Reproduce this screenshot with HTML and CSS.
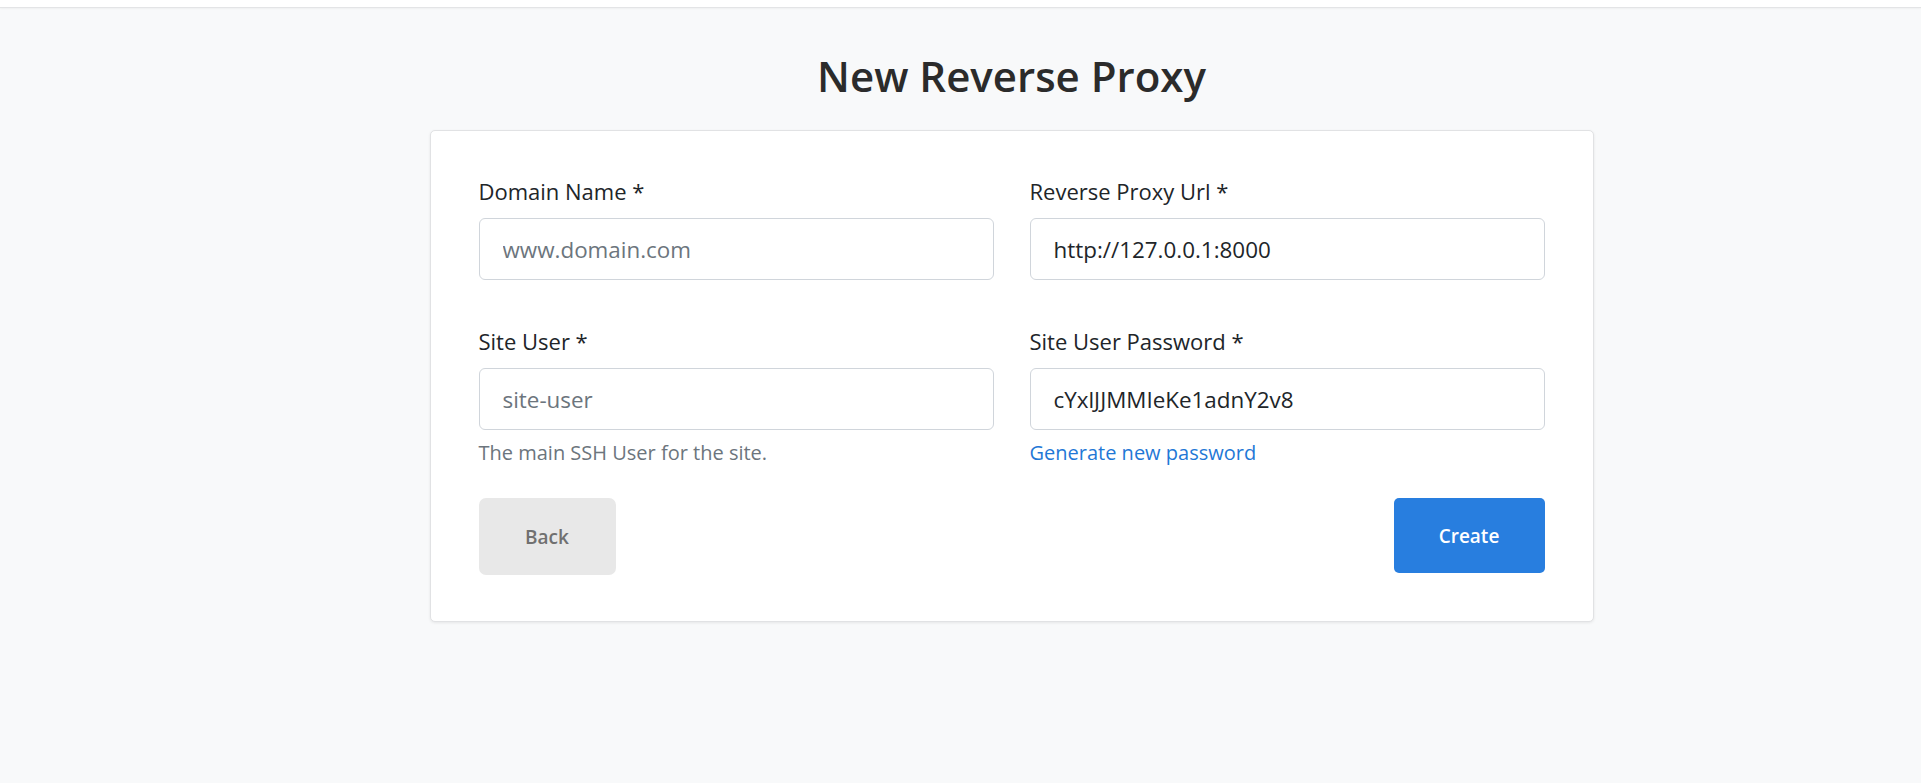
FILE: index.html
```html
<!DOCTYPE html>
<html lang="en">
<head>
<meta charset="utf-8">
<title>New Reverse Proxy</title>
<link rel="stylesheet" href="styles.css">
</head>
<body>
<div class="topbar"></div>
<main class="main">
  <h1 class="title">New Reverse Proxy</h1>
  <form class="card">
    <div class="grid">
      <div class="field">
        <label class="label">Domain Name *</label>
        <input class="input" type="text" placeholder="www.domain.com">
      </div>
      <div class="field">
        <label class="label">Reverse Proxy Url *</label>
        <input class="input" type="text" value="http://127.0.0.1:8000">
      </div>
      <div class="field">
        <label class="label">Site User *</label>
        <input class="input" type="text" placeholder="site-user">
        <div class="help">The main SSH User for the site.</div>
      </div>
      <div class="field">
        <label class="label">Site User Password *</label>
        <input class="input" type="text" value="cYxlJJMMIeKe1adnY2v8">
        <a class="help link" href="#">Generate new password</a>
      </div>
    </div>
    <div class="actions">
      <button type="button" class="btn btn-back">Back</button>
      <button type="button" class="btn btn-create">Create</button>
    </div>
  </form>
</main>
</body>
</html>
```
FILE: styles.css
```css
* { box-sizing: border-box; }
html, body { margin: 0; padding: 0; }
body {
  background: #f8f9fa;
  font-family: "Open Sans", "Noto Sans", sans-serif;
  color: #212529;
  min-height: 783px;
}
.topbar {
  height: 8px;
  background: #ffffff;
  border-bottom: 1px solid #e3e4e6;
  box-shadow: 0 1px 2px rgba(0,0,0,0.04);
}
.main {
  padding-left: 102px;
  display: flex;
  flex-direction: column;
  align-items: center;
}
.title {
  margin: 44px 0 0;
  font-size: 42px;
  line-height: 48px;
  font-weight: 600;
  color: #2b2b2b;
  letter-spacing: 0;
}
.card {
  width: 1164px;
  margin-top: 30px;
  background: #fff;
  border: 1px solid #e1e2e4;
  border-radius: 5px;
  box-shadow: 0 1px 3px rgba(0,0,0,0.08);
  padding: 44px 48px 46px 48px;
}
.grid {
  display: grid;
  grid-template-columns: 1fr 1fr;
  column-gap: 36px;
  row-gap: 45px;
}
.field { display: flex; flex-direction: column; align-items: flex-start; }
.label {
  font-size: 22px;
  line-height: 33px;
  margin-bottom: 10px;
  color: #212529;
}
.input {
  width: 100%;
  height: 62px;
  border: 1px solid #d0d5db;
  border-radius: 6px;
  padding: 0 23px;
  font-family: inherit;
  font-size: 22.4px;
  color: #212529;
  background: #fff;
  outline: none;
}
.input::placeholder { color: #6c757d; opacity: 1; }
.help {
  margin-top: 9px;
  font-size: 20px;
  line-height: 28px;
  color: #6c757d;
}
.link { color: #1f78d6; text-decoration: none; }
.actions {
  margin-top: 31px;
  display: flex;
  justify-content: space-between;
  align-items: flex-start;
}
.btn {
  border: 0;
  font-family: inherit;
  font-size: 19px;
  font-weight: 600;
  cursor: pointer;
}
.btn-back {
  width: 137px;
  height: 77px;
  border-radius: 7px;
  background: #e8e8e8;
  color: #707070;
}
.btn-create {
  width: 151px;
  height: 75px;
  border-radius: 5px;
  background: #287edf;
  color: #fff;
}
```
